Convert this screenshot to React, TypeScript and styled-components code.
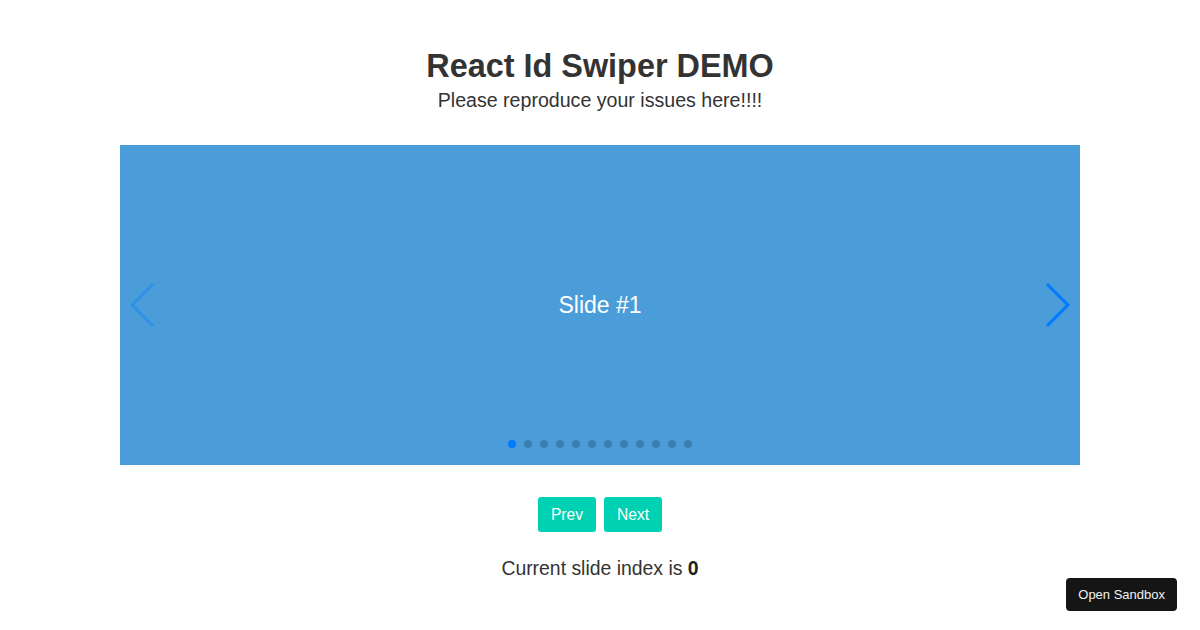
import React, { useState } from 'react'
import styled, { createGlobalStyle } from 'styled-components'

const GlobalStyle = createGlobalStyle`
  html, body {
    margin: 0;
    padding: 0;
    background: #fff;
  }
  body {
    font-family: 'Liberation Sans', Arial, sans-serif;
    color: #333;
  }
`

const Page = styled.div`
  display: flex;
  flex-direction: column;
  align-items: center;
  width: 1200px;
  height: 630px;
  padding-top: 46px;
  box-sizing: border-box;
`

const Title = styled.h1`
  margin: 0;
  font-size: 32.4px;
  line-height: 40px;
  font-weight: 700;
  color: #333;
`

const Subtitle = styled.p`
  margin: 2px 0 0;
  font-size: 19.6px;
  line-height: 24px;
  color: #333;
`

const SwiperContainer = styled.div`
  position: relative;
  width: 960px;
  height: 320px;
  margin-top: 33px;
  overflow: hidden;
`

const Slide = styled.div`
  display: flex;
  align-items: center;
  justify-content: center;
  width: 100%;
  height: 100%;
  background: #4a9dd9;
  color: #fff;
  font-size: 23px;
`

const NavButton = styled.div<{ $side: 'left' | 'right'; $disabled?: boolean }>`
  position: absolute;
  top: 50%;
  margin-top: -22px;
  width: 27px;
  height: 44px;
  ${(p) => (p.$side === 'left' ? 'left: 10px;' : 'right: 10px;')}
  opacity: ${(p) => (p.$disabled ? 0.35 : 1)};
  cursor: pointer;
  display: flex;

  svg {
    width: 27px;
    height: 44px;
  }
`

const Pagination = styled.div`
  position: absolute;
  left: 0;
  right: 0;
  bottom: 17px;
  display: flex;
  justify-content: center;
`

const Bullet = styled.span<{ $active?: boolean }>`
  width: 8px;
  height: 8px;
  margin: 0 4px;
  border-radius: 50%;
  background: ${(p) => (p.$active ? '#007aff' : '#000')};
  opacity: ${(p) => (p.$active ? 1 : 0.2)};
`

const Controls = styled.div`
  display: flex;
  gap: 8px;
  margin-top: 32px;
`

const ActionButton = styled.button`
  width: 58px;
  height: 35px;
  padding: 0;
  border: none;
  border-radius: 3px;
  background: #00d1b2;
  color: #fff;
  font-family: 'Liberation Sans', Arial, sans-serif;
  font-size: 15.6px;
  cursor: pointer;
`

const Status = styled.p`
  margin: 24px 0 0;
  font-size: 19.4px;
  line-height: 24px;
  color: #333;

  b {
    color: #222;
  }
`

const SandboxButton = styled.button`
  position: fixed;
  right: 23px;
  bottom: 19px;
  height: 33px;
  padding: 0 12px;
  border: none;
  border-radius: 4px;
  background: #151515;
  color: #f2f2f2;
  font-family: 'Liberation Sans', Arial, sans-serif;
  font-size: 13px;
  cursor: pointer;
`

const SLIDES = 12

const Chevron = ({ dir }: { dir: 'prev' | 'next' }) => (
  <svg viewBox="0 0 27 44" xmlns="http://www.w3.org/2000/svg">
    {dir === 'prev' ? (
      <path d="M0,22L22,0l2.1,2.1L4.2,22l19.9,19.9L22,44L0,22z" fill="#007aff" />
    ) : (
      <path d="M27,22L5,44l-2.1-2.1L22.8,22L2.9,2.1L5,0L27,22z" fill="#007aff" />
    )}
  </svg>
)

const App = () => {
  const [index, setIndex] = useState(0)

  const prev = () => setIndex((i) => Math.max(0, i - 1))
  const next = () => setIndex((i) => Math.min(SLIDES - 1, i + 1))

  return (
    <>
      <GlobalStyle />
      <Page>
        <Title>React Id Swiper DEMO</Title>
        <Subtitle>Please reproduce your issues here!!!!</Subtitle>
        <SwiperContainer>
          <Slide>Slide #{index + 1}</Slide>
          <NavButton $side="left" $disabled={index === 0} onClick={prev}>
            <Chevron dir="prev" />
          </NavButton>
          <NavButton $side="right" $disabled={index === SLIDES - 1} onClick={next}>
            <Chevron dir="next" />
          </NavButton>
          <Pagination>
            {Array.from({ length: SLIDES }).map((_, i) => (
              <Bullet key={i} $active={i === index} />
            ))}
          </Pagination>
        </SwiperContainer>
        <Controls>
          <ActionButton onClick={prev}>Prev</ActionButton>
          <ActionButton onClick={next}>Next</ActionButton>
        </Controls>
        <Status>
          Current slide index is <b>{index}</b>
        </Status>
      </Page>
      <SandboxButton>Open Sandbox</SandboxButton>
    </>
  )
}

export default App
